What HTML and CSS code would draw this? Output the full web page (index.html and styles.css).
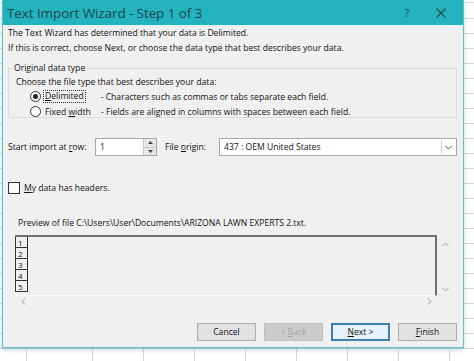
FILE: index.html
```html
<!DOCTYPE html>
<html lang="en">
<head>
<meta charset="UTF-8" />
<meta name="viewport" content="width=device-width, initial-scale=1" />
<title>Text Import Wizard - Step 1 of 3</title>
<link rel="stylesheet" href="styles.css">
</head>
<body>

<div class="dialog">
  <div class="titlebar">
    <span class="title">Text Import Wizard - Step 1 of 3</span>
    <span class="help">?</span>
    <span class="close">
      <svg width="10" height="10" viewBox="0 0 10 10"><path d="M0.5 0.5 L9.5 9.5 M9.5 0.5 L0.5 9.5" stroke="#2b4a50" stroke-width="1.2" fill="none"/></svg>
    </span>
  </div>

  <div class="content">
    <p class="line">The Text Wizard has determined that your data is Delimited.</p>
    <p class="line">If this is correct, choose Next, or choose the data type that best describes your data.</p>

    <fieldset class="group">
      <legend>Original data type</legend>
      <div class="choose">Choose the file type that best describes your data:</div>
      <div class="option">
        <span class="radio checked"></span>
        <span class="opt-name focus"><u>D</u>elimited</span>
        <span class="opt-desc">- Characters such as commas or tabs separate each field.</span>
      </div>
      <div class="option">
        <span class="radio"></span>
        <span class="opt-name">Fixed <u>w</u>idth</span>
        <span class="opt-desc">- Fields are aligned in columns with spaces between each field.</span>
      </div>
    </fieldset>

    <div class="import-row">
      <span class="start-label">Start import at <u>r</u>ow:</span>
      <div class="spin">
        <span class="spin-value">1</span>
        <div class="spin-btns">
          <span class="spin-btn"><svg width="5" height="3" viewBox="0 0 5 3"><path d="M0 3 L2.5 0 L5 3Z" fill="#444"/></svg></span>
          <span class="spin-btn"><svg width="5" height="3" viewBox="0 0 5 3"><path d="M0 0 L2.5 3 L5 0Z" fill="#444"/></svg></span>
        </div>
      </div>
      <span class="origin-label">File <u>o</u>rigin:</span>
      <div class="select">
        <span class="select-value">437 : OEM United States</span>
        <span class="select-arrow"><svg width="7" height="5" viewBox="0 0 7 5"><path d="M0.5 1 L3.5 4 L6.5 1" stroke="#555" fill="none"/></svg></span>
      </div>
    </div>

    <label class="check-row">
      <span class="checkbox"></span>
      <span><u>M</u>y data has headers.</span>
    </label>

    <div class="preview-label">Preview of file C:\Users\User\Documents\ARIZONA LAWN EXPERTS 2.txt.</div>

    <div class="preview">
      <div class="preview-main">
        <div class="preview-data">
          <div class="row-nums">
            <span>1</span>
            <span>2</span>
            <span>3</span>
            <span>4</span>
            <span>5</span>
          </div>
        </div>
        <div class="vscroll">
          <svg width="7" height="5" viewBox="0 0 7 5"><path d="M0.5 4 L3.5 1 L6.5 4" stroke="#9a9a9a" fill="none"/></svg>
          <svg width="7" height="5" viewBox="0 0 7 5"><path d="M0.5 1 L3.5 4 L6.5 1" stroke="#9a9a9a" fill="none"/></svg>
        </div>
      </div>
      <div class="hscroll">
        <svg width="5" height="7" viewBox="0 0 5 7"><path d="M4 0.5 L1 3.5 L4 6.5" stroke="#9a9a9a" fill="none"/></svg>
        <svg width="5" height="7" viewBox="0 0 5 7"><path d="M1 0.5 L4 3.5 L1 6.5" stroke="#9a9a9a" fill="none"/></svg>
      </div>
    </div>

    <div class="buttons">
      <span class="btn">Cancel</span>
      <span class="btn disabled">&lt; <u>B</u>ack</span>
      <span class="btn default"><u>N</u>ext &gt;</span>
      <span class="btn"><u>F</u>inish</span>
    </div>
  </div>
</div>

</body>
</html>
```

FILE: styles.css
```css
/* Hoja de cálculo de fondo */
html, body {
  margin: 0;
  height: 100%;
  overflow: hidden;
}

body {
  font-family: "Open Sans", "Noto Sans", sans-serif;
  color: #111;
  background-color: #fff;
  background-image:
    repeating-linear-gradient(to bottom, transparent 0 14px, #d6d6d6 14px 15px),
    repeating-linear-gradient(to right, transparent 0 50px, #d6d6d6 50px 51px);
  background-position: 0 4px, 42px 0;
}

/* Ventana del asistente */
.dialog {
  margin-left: 2px;
  width: 460px;
  height: 347px;
  background: #f0f0f0;
  border: 1px solid #5fc0c6;
  border-top: none;
  box-shadow: 0 2px 4px rgba(60, 150, 160, 0.35);
  display: flex;
  flex-direction: column;
}

.titlebar {
  height: 25px;
  background: #22b3be;
  display: flex;
  align-items: center;
  padding-left: 4px;
  color: #21464c;
}

.title {
  font-size: 13.5px;
  flex: 1;
  letter-spacing: -0.1px;
}

.help {
  font-size: 10px;
  width: 20px;
  text-align: center;
  margin-right: 19px;
}

.close {
  display: flex;
  width: 14px;
  margin-right: 13px;
}

.content {
  flex: 1;
  padding: 1px 6px 0 5px;
  font-size: 8.6px;
  display: flex;
  flex-direction: column;
}

.line {
  margin: 0;
  line-height: 15px;
}

/* Grupo "Original data type" */
.group {
  margin: 5px 0 0 0;
  padding: 0 0 1px 7px;
  border: 1px solid #dcdcdc;
  height: 54px;
  box-sizing: content-box;
}

.group legend {
  padding: 0 1px;
  margin-left: -3px;
  line-height: 14px;
}

.choose {
  line-height: 14px;
  margin-top: 0;
}

.option {
  display: flex;
  align-items: center;
  height: 15px;
  padding-left: 14px;
}

.radio {
  width: 9px;
  height: 9px;
  border: 1px solid #333;
  border-radius: 50%;
  background: #fff;
  position: relative;
  margin-right: 3px;
}

.radio.checked::after {
  content: "";
  position: absolute;
  left: 2px;
  top: 2px;
  width: 5px;
  height: 5px;
  border-radius: 50%;
  background: #222;
}

.opt-name {
  width: 55px;
  padding: 0 1px;
}

.opt-name.focus {
  width: auto;
  outline: 1px dotted #333;
  margin-right: 16px;
  line-height: 11px;
}

/* Fila de inicio y origen */
.import-row {
  display: flex;
  align-items: center;
  margin-top: 20px;
  height: 18px;
}

.start-label {
  width: 87px;
}

.spin {
  width: 60px;
  height: 16px;
  border: 1px solid #a8a8a8;
  background: #fff;
  display: flex;
}

.spin-value {
  flex: 1;
  padding-left: 4px;
  line-height: 16px;
}

.spin-btns {
  width: 12px;
  display: flex;
  flex-direction: column;
  border-left: 1px solid #c8c8c8;
  background: #e6e6e6;
}

.spin-btn {
  flex: 1;
  display: flex;
  align-items: center;
  justify-content: center;
}

.spin-btn + .spin-btn {
  border-top: 1px solid #c8c8c8;
}

.origin-label {
  margin-left: 8px;
  width: 54px;
}

.select {
  flex: 1;
  height: 16px;
  border: 1px solid #a8a8a8;
  background: #fff;
  display: flex;
  align-items: center;
}

.select-value {
  flex: 1;
  padding-left: 4px;
}

.select-arrow {
  width: 13px;
  height: 14px;
  margin-right: 1px;
  border-left: 1px solid #d0d0d0;
  display: flex;
  align-items: center;
  justify-content: center;
}

.check-row {
  display: flex;
  align-items: center;
  margin-top: 25px;
  height: 14px;
}

.checkbox {
  width: 10px;
  height: 10px;
  border: 1px solid #333;
  background: #fff;
  margin-right: 4px;
}

.preview-label {
  margin-top: 21px;
  padding-left: 10px;
  line-height: 14px;
}

/* Vista previa */
.preview {
  margin: 5px 4px 0 7px;
  font-size: 8px;
}

.preview-main {
  display: flex;
  height: 61px;
}

.preview-data {
  flex: 1;
  border-top: 2px solid #6f6f6f;
  border-right: 2px solid #6f6f6f;
  border-bottom: 1px solid #fff;
}

.row-nums {
  width: 11px;
  display: flex;
  flex-direction: column;
  border-left: 1px solid #333;
  border-right: 1px solid #333;
}

.row-nums span {
  height: 11px;
  line-height: 11px;
  padding-left: 2px;
  border-bottom: 1px solid #333;
  box-sizing: border-box;
}

.vscroll {
  width: 16px;
  display: flex;
  flex-direction: column;
  align-items: center;
  justify-content: space-between;
  padding: 7px 0 4px;
}

.hscroll {
  height: 10px;
  margin-right: 16px;
  display: flex;
  align-items: center;
  justify-content: space-between;
  padding: 0 5px 0 6px;
}

/* Botones */
.buttons {
  display: flex;
  justify-content: flex-end;
  gap: 8px;
  margin-top: 17px;
}

.btn {
  width: 57px;
  height: 16px;
  line-height: 16px;
  text-align: center;
  border: 1px solid #adadad;
  background: #e1e1e1;
}

.btn.disabled {
  color: #a3a3a3;
  background: #cccccc;
  border-color: #bfbfbf;
}

.btn.default {
  border: 1px solid #3c7fb1;
  box-shadow: inset 0 0 0 1px #3c7fb1;
  background: #e5f1fb;
}
```
